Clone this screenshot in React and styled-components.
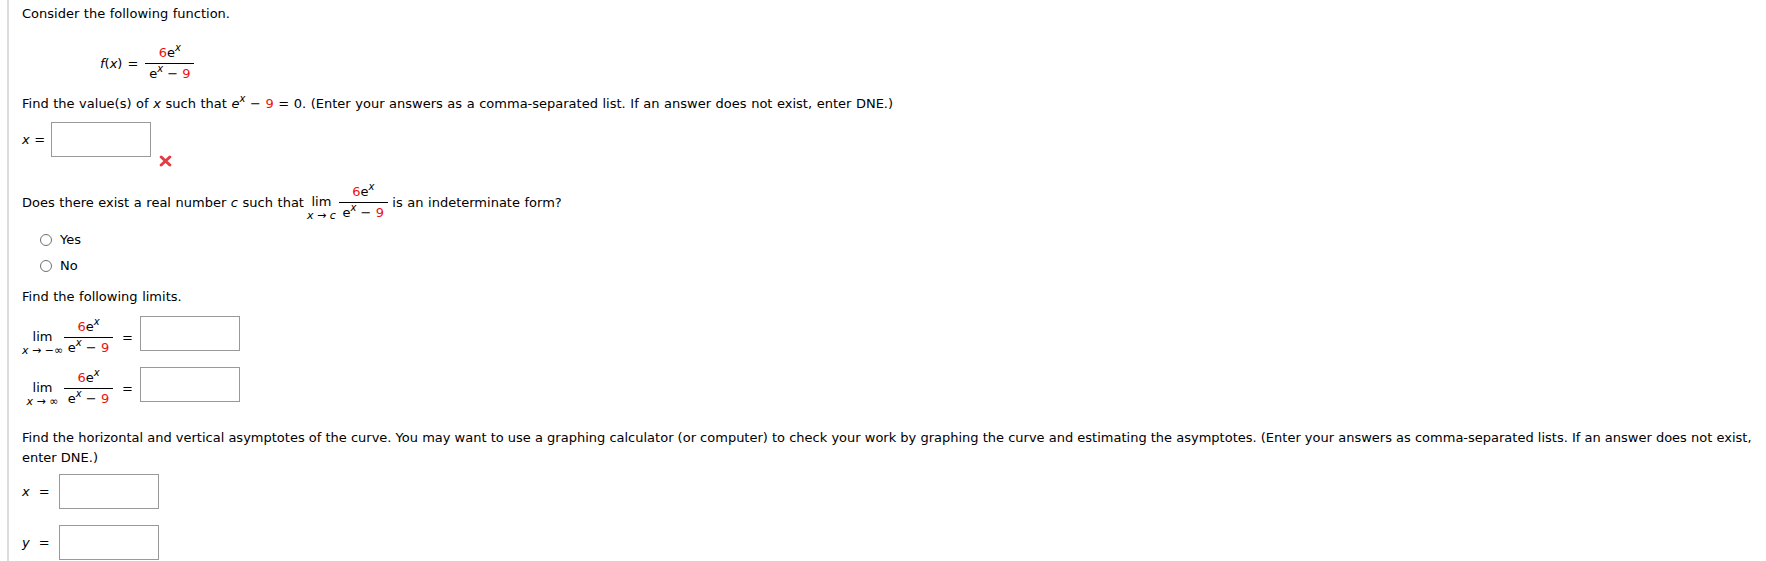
import React from 'react';
import styled, { createGlobalStyle } from 'styled-components';

const GlobalStyle = createGlobalStyle`
  html, body {
    margin: 0;
    padding: 0;
    background: #fff;
  }
  body {
    font-family: "DejaVu Sans", Verdana, sans-serif;
    font-size: 13px;
    word-spacing: 0.44px;
    color: #000;
  }
`;

const Page = styled.div`
  box-sizing: border-box;
  min-height: 561px;
  margin-left: 7px;
  padding: 6px 0 0 13px;
  border-left: 2px solid #dcdcdc;
`;

const Para = styled.p`
  margin: ${(props) => props.$mt || 0}px 0 0;
  line-height: ${(props) => props.$lh || 16}px;
`;

const Var = styled.i`
  font-style: italic;
`;

const Num = styled.span`
  color: #ee1111;
`;

const Sup = styled.sup`
  font-size: 10px;
  line-height: 0;
  vertical-align: 6px;
  font-style: italic;
`;

const Frac = styled.span`
  display: inline-flex;
  flex-direction: column;
  align-items: center;
  width: 49px;
  word-spacing: 0;
`;

const FracTop = styled.span`
  line-height: 16px;
  padding-bottom: 2px;
  white-space: nowrap;
`;

const FracBar = styled.span`
  align-self: stretch;
  height: 1px;
  background: #000;
`;

const FracBottom = styled.span`
  line-height: 16px;
  padding-top: 2px;
  white-space: nowrap;
`;

const FuncRow = styled.div`
  display: flex;
  align-items: center;
  margin: 23px 0 0 78px;
`;

const Eq = styled.span`
  margin: 0 ${(props) => props.$gap || 7}px 0 ${(props) => props.$lead || 5}px;
`;

const AnswerRow = styled.div`
  display: flex;
  align-items: center;
  margin-top: ${(props) => props.$mt || 0}px;
`;

const Label = styled.span`
  white-space: pre;
  margin-right: ${(props) => props.$gap || 6}px;
`;

const Answer = styled.span`
  box-sizing: border-box;
  display: inline-block;
  width: 100px;
  height: 35px;
  border: 1px solid #999;
  background: #fff;
`;

const Mark = styled.svg`
  align-self: flex-end;
  margin: 0 0 -10px 8px;
  width: 13px;
  height: 12px;
`;

const InlineRow = styled.div`
  display: flex;
  align-items: center;
  margin-top: ${(props) => props.$mt || 0}px;
`;

const LimStack = styled.span`
  display: inline-flex;
  flex-direction: column;
  align-items: center;
  padding-top: 12px;
  margin: 0 3px;
`;

const LimWord = styled.span`
  line-height: 16px;
`;

const LimSub = styled.span`
  font-size: 11px;
  line-height: 12px;
  white-space: nowrap;
  word-spacing: 0;
`;

const Choices = styled.div`
  display: flex;
  flex-direction: column;
  gap: 10px;
  margin: 10px 0 0 18px;
`;

const Choice = styled.label`
  display: flex;
  align-items: center;
  gap: 8px;
  line-height: 16px;
`;

const Radio = styled.span`
  box-sizing: border-box;
  width: 12px;
  height: 12px;
  border: 1px solid #707070;
  border-radius: 50%;
  background: #fff;
`;

const LimRow = styled.div`
  display: flex;
  align-items: center;
  margin-top: ${(props) => props.$mt || 0}px;

  & > ${LimStack} {
    width: 41px;
    margin: 0 1px 0 0;
  }

  & > ${Answer} {
    margin-bottom: 7px;
  }
`;

const Wide = styled(Para)`
  word-spacing: 0;
`;

const Exp = () => (
  <>
    e<Sup>x</Sup>
  </>
);

const Fraction = () => (
  <Frac>
    <FracTop>
      <Num>6</Num>
      <Exp />
    </FracTop>
    <FracBar />
    <FracBottom>
      <Exp /> − <Num>9</Num>
    </FracBottom>
  </Frac>
);

const WrongMark = () => (
  <Mark viewBox="0 0 13 12">
    <path
      d="M2.2 2 L10.8 10 M10.8 2 L2.2 10"
      stroke="#e23b43"
      strokeWidth="3"
      strokeLinecap="round"
      fill="none"
    />
  </Mark>
);

const Limit = ({ sub, mt }) => (
  <LimRow $mt={mt}>
    <LimStack>
      <LimWord>lim</LimWord>
      <LimSub>{sub}</LimSub>
    </LimStack>
    <Fraction />
    <Eq $lead={9} $gap={7}>=</Eq>
    <Answer />
  </LimRow>
);

export default function App() {
  return (
    <>
      <GlobalStyle />
      <Page>
        <Para>Consider the following function.</Para>
        <FuncRow>
          <span>
            <Var>f</Var>(<Var>x</Var>)
          </span>
          <Eq>=</Eq>
          <Fraction />
        </FuncRow>

        <Para $mt={14}>
          Find the value(s) of <Var>x</Var> such that <Var>e</Var>
          <Sup>x</Sup> − <Num>9</Num> = 0. (Enter your answers as a
          comma-separated list. If an answer does not exist, enter DNE.)
        </Para>
        <AnswerRow $mt={10}>
          <Label>
            <Var>x</Var> =
          </Label>
          <Answer />
          <WrongMark />
        </AnswerRow>

        <InlineRow $mt={25}>
          <span>
            Does there exist a real number <Var>c</Var> such that
          </span>
          <LimStack>
            <LimWord>lim</LimWord>
            <LimSub>
              <Var>x</Var> → <Var>c</Var>
            </LimSub>
          </LimStack>
          <Fraction />
          <span>&nbsp;is an indeterminate form?</span>
        </InlineRow>

        <Choices>
          <Choice>
            <Radio />
            Yes
          </Choice>
          <Choice>
            <Radio />
            No
          </Choice>
        </Choices>

        <Para $mt={15}>Find the following limits.</Para>
        <Limit
          mt={11}
          sub={
            <>
              <Var>x</Var> → −∞
            </>
          }
        />
        <Limit
          mt={9}
          sub={
            <>
              <Var>x</Var> → ∞
            </>
          }
        />

        <Wide $mt={19} $lh={20}>
          Find the horizontal and vertical asymptotes of the curve. You may
          want to use a graphing calculator (or computer) to check your work
          by graphing the curve and estimating the asymptotes. (Enter your
          answers as comma-separated lists. If an answer does not exist,
          enter DNE.)
        </Wide>
        <AnswerRow $mt={6}>
          <Label $gap={9}>
            <Var>x</Var>{'  '}=
          </Label>
          <Answer />
        </AnswerRow>
        <AnswerRow $mt={16}>
          <Label $gap={9}>
            <Var>y</Var>{'  '}=
          </Label>
          <Answer />
        </AnswerRow>
      </Page>
    </>
  );
}
